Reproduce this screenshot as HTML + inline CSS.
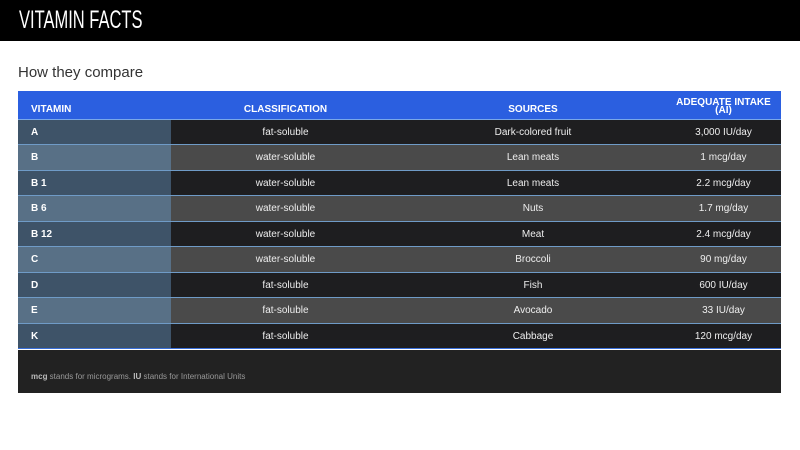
<!DOCTYPE html>
<html><head><style>
*{margin:0;padding:0;box-sizing:border-box}
body{width:800px;height:450px;background:#fff;font-family:"Liberation Sans",sans-serif;overflow:hidden;position:relative}
.hdr{position:absolute;left:0;top:0;width:800px;height:41px;background:#000;color:#fff;font-family:"Liberation Sans Narrow","Liberation Sans",sans-serif;font-size:25px;line-height:41px;padding-left:19px}
.hdr span{display:inline-block;transform:scaleX(0.66);transform-origin:left}
h2{position:absolute;left:18px;top:64px;font-size:15px;font-weight:normal;color:#333}
table{position:absolute;left:18px;top:91px;width:763px;border-collapse:collapse;font-size:10px;color:#eee}
th{background:#2b5fe0;color:#fff;font-weight:bold;height:28px;font-size:10px;border-bottom:1.5px solid #7aa8e8;vertical-align:bottom;padding-bottom:4px}
td{height:25.5px;text-align:center;border-bottom:1.5px solid #6f9bc7;padding-top:1px}
td:first-child{text-align:left;padding-left:13px;font-weight:bold;color:#fff}
tr.o td{background:#1e1e20}tr.o td:first-child{background:#3e5368}
tr.e td{background:#4a4a4a}tr.e td:first-child{background:#587086}
tr:last-child td{border-bottom:1.5px solid #3a6fd8}
.ft{position:absolute;left:18px;top:350px;width:763px;height:43px;background:#222;color:#999;font-size:8px;padding:22px 0 0 13px}
.ft b{color:#bbb}
</style></head><body>
<div class="hdr"><span>VITAMIN FACTS</span></div>
<h2>How they compare</h2>
<table>
<tr><th style="width:153px;text-align:left;padding-left:13px">VITAMIN</th><th style="width:229px">CLASSIFICATION</th><th style="width:266px">SOURCES</th><th style="width:115px;line-height:8px">ADEQUATE INTAKE<br>(AI)</th></tr>
<tr class="o"><td>A</td><td>fat-soluble</td><td>Dark-colored fruit</td><td>3,000 IU/day</td></tr>
<tr class="e"><td>B</td><td>water-soluble</td><td>Lean meats</td><td>1 mcg/day</td></tr>
<tr class="o"><td>B 1</td><td>water-soluble</td><td>Lean meats</td><td>2.2 mcg/day</td></tr>
<tr class="e"><td>B 6</td><td>water-soluble</td><td>Nuts</td><td>1.7 mg/day</td></tr>
<tr class="o"><td>B 12</td><td>water-soluble</td><td>Meat</td><td>2.4 mcg/day</td></tr>
<tr class="e"><td>C</td><td>water-soluble</td><td>Broccoli</td><td>90 mg/day</td></tr>
<tr class="o"><td>D</td><td>fat-soluble</td><td>Fish</td><td>600 IU/day</td></tr>
<tr class="e"><td>E</td><td>fat-soluble</td><td>Avocado</td><td>33 IU/day</td></tr>
<tr class="o"><td>K</td><td>fat-soluble</td><td>Cabbage</td><td>120 mcg/day</td></tr>
</table>
<div class="ft"><b>mcg</b> stands for micrograms. <b>IU</b> stands for International Units</div>
</body></html>
